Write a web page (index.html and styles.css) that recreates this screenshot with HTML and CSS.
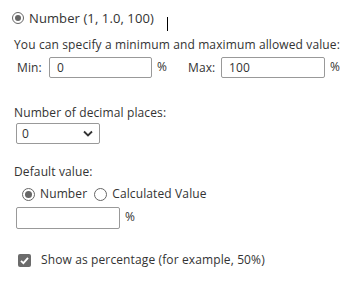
FILE: index.html
```html
<!DOCTYPE html>
<html>
<head>
<meta charset="utf-8">
<link rel="stylesheet" href="styles.css">
</head>
<body>
<div class="panel">
  <div class="row-top">
    <span class="radio checked"></span><span class="top-label">Number (1, 1.0, 100)</span>
    <span class="caret"></span>
  </div>
  <div class="text-line">You can specify a minimum and maximum allowed value:</div>
  <div class="minmax">
    <span class="lbl-min">Min:</span>
    <span class="field field-min">0</span>
    <span class="pct">%</span>
    <span class="lbl-max">Max:</span>
    <span class="field field-max">100</span>
    <span class="pct">%</span>
  </div>
  <div class="text-line section">Number of decimal places:</div>
  <div class="select">
    <span class="select-val">0</span>
    <svg class="chev" width="10" height="7" viewBox="0 0 10 7"><path d="M1 1.5 L5 5.5 L9 1.5" fill="none" stroke="#333" stroke-width="1.8"/></svg>
  </div>
  <div class="text-line section2">Default value:</div>
  <div class="radio-row">
    <span class="radio checked"></span><span class="opt">Number</span>
    <span class="radio"></span><span class="opt">Calculated Value</span>
  </div>
  <div class="default-row">
    <span class="field field-def"></span>
    <span class="pct">%</span>
  </div>
  <div class="check-row">
    <span class="checkbox"><svg width="13" height="13" viewBox="0 0 13 13"><path d="M3 6.8 L5.4 9.2 L10 3.8" fill="none" stroke="#fff" stroke-width="1.8"/></svg></span>
    <span class="check-label">Show as percentage (for example, 50%)</span>
  </div>
</div>
</body>
</html>
```

FILE: styles.css
```css
html, body {
  margin: 0;
  padding: 0;
  background: #fff;
}
body {
  font-family: "Open Sans", "Noto Sans", sans-serif;
  font-size: 12px;
  letter-spacing: 0.12px;
  color: #333;
  width: 363px;
  height: 281px;
  overflow: hidden;
}
.panel {
  position: relative;
  padding-top: 10px;
}
.row-top {
  display: flex;
  align-items: center;
  height: 16px;
  line-height: 16px;
  padding-left: 12px;
}
.row-top .radio {
  width: 12px;
  height: 12px;
}
.row-top .radio.checked::after {
  width: 6px;
  height: 6px;
}
.top-label {
  margin-left: 5px;
  font-size: 13px;
  letter-spacing: 0.1px;
  color: #333;
}
.caret {
  position: absolute;
  left: 167px;
  top: 17px;
  width: 1px;
  height: 14px;
  background: #000;
}
.radio {
  box-sizing: border-box;
  width: 13px;
  height: 13px;
  border: 1px solid #666;
  border-radius: 50%;
  display: inline-flex;
  align-items: center;
  justify-content: center;
  background: #fff;
  flex: none;
}
.radio.checked::after {
  content: "";
  width: 7px;
  height: 7px;
  border-radius: 50%;
  background: #666;
}
.text-line {
  height: 16px;
  line-height: 16px;
  margin-top: 11px;
  padding-left: 14px;
  white-space: nowrap;
}
.minmax {
  display: flex;
  align-items: center;
  margin-top: 4px;
  height: 21px;
  padding-left: 17px;
}
.lbl-min {
  width: 32px;
}
.field {
  box-sizing: border-box;
  height: 21px;
  border: 1px solid #999;
  border-radius: 2px;
  padding-left: 7px;
  line-height: 19px;
  color: #333;
}
.field-min {
  width: 103px;
}
.field-max {
  width: 104px;
}
.pct {
  margin-left: 5px;
  margin-top: -3px;
  width: 9px;
}
.lbl-max {
  margin-left: 22px;
  width: 33px;
}
.section {
  margin-top: 27px;
}
.select {
  box-sizing: border-box;
  margin-top: 2px;
  margin-left: 16px;
  width: 84px;
  height: 21px;
  border: 1px solid #999;
  border-radius: 2px;
  display: flex;
  align-items: center;
  justify-content: space-between;
  padding: 0 6px 0 5px;
}
.select-val {
  line-height: 19px;
}
.chev {
  display: block;
}
.section2 {
  margin-top: 20px;
}
.radio-row {
  display: flex;
  align-items: center;
  height: 16px;
  line-height: 16px;
  margin-top: 6px;
  padding-left: 22px;
}
.opt {
  margin-left: 5px;
  margin-right: 7px;
}
.default-row {
  display: flex;
  align-items: center;
  margin-top: 5px;
  padding-left: 16px;
  height: 22px;
}
.field-def {
  width: 104px;
  height: 22px;
}
.check-row {
  display: flex;
  align-items: center;
  margin-top: 23px;
  height: 16px;
  line-height: 16px;
  padding-left: 18px;
}
.checkbox {
  width: 13px;
  height: 13px;
  border-radius: 2px;
  background: #6b6b6b;
  display: block;
  flex: none;
}
.checkbox svg {
  display: block;
}
.check-label {
  margin-left: 10px;
}
```
